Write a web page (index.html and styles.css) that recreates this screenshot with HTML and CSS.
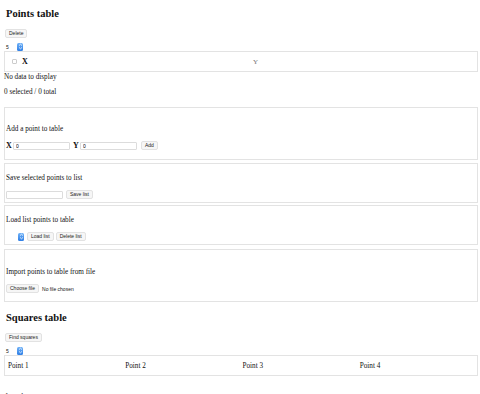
FILE: index.html
```html
<!DOCTYPE html>
<html lang="en">
<head>
    <meta charset="UTF-8">
    <title>Points and squares</title>
    <link rel="stylesheet" href="styles.css">
</head>
<body>
    <h1 class="title">Points table</h1>
    <div class="controls">
        <button class="btn">Delete</button>
        <div class="select">
            <span class="select-value">5</span>
            <span class="select-arrow"><svg width="5" height="7" viewBox="0 0 5 7"><path d="M1 2.6 L2.5 1.2 L4 2.6 M1 4.4 L2.5 5.8 L4 4.4" fill="none" stroke="#fff" stroke-width="0.8"/></svg></span>
        </div>
    </div>
    <div class="table">
        <div class="table-row points-row">
            <span class="cell-check"><span class="check"></span></span>
            <span class="head">X</span>
            <span class="head head-light">Y</span>
        </div>
    </div>
    <p class="note">No data to display</p>
    <p class="count">0 selected / 0 total</p>

    <section class="panel panel-tall">
        <p class="panel-title">Add a point to table</p>
        <div class="row">
            <label class="axis">X</label><input class="field" value="0">
            <label class="axis axis-y">Y</label><input class="field" value="0">
            <button class="btn btn-add">Add</button>
        </div>
    </section>

    <section class="panel panel-short">
        <p class="panel-title">Save selected points to list</p>
        <div class="row">
            <input class="field">
            <button class="btn">Save list</button>
        </div>
    </section>

    <section class="panel panel-short panel-load">
        <p class="panel-title">Load list points to table</p>
        <div class="row">
            <div class="select select-empty">
                <span class="select-value"></span>
                <span class="select-arrow"><svg width="5" height="7" viewBox="0 0 5 7"><path d="M1 2.6 L2.5 1.2 L4 2.6 M1 4.4 L2.5 5.8 L4 4.4" fill="none" stroke="#fff" stroke-width="0.8"/></svg></span>
            </div>
            <button class="btn">Load list</button>
            <button class="btn">Delete list</button>
        </div>
    </section>

    <section class="panel panel-tall panel-import">
        <p class="panel-title">Import points to table from file</p>
        <div class="row">
            <button class="btn">Choose file</button>
            <span class="file-name">No file chosen</span>
        </div>
    </section>

    <h1 class="title title-squares">Squares table</h1>
    <div class="controls">
        <button class="btn">Find squares</button>
        <div class="select">
            <span class="select-value">5</span>
            <span class="select-arrow"><svg width="5" height="7" viewBox="0 0 5 7"><path d="M1 2.6 L2.5 1.2 L4 2.6 M1 4.4 L2.5 5.8 L4 4.4" fill="none" stroke="#fff" stroke-width="0.8"/></svg></span>
        </div>
    </div>
    <div class="table">
        <div class="table-row squares-row">
            <span>Point 1</span>
            <span>Point 2</span>
            <span>Point 3</span>
            <span>Point 4</span>
        </div>
    </div>
    <p class="total">1 total</p>
</body>
</html>
```

FILE: styles.css
```css
* { box-sizing: border-box; }
body { margin: 0; padding: 0 2px 0 4px; font-family: "Liberation Serif", "Times New Roman", serif; font-size: 7.2px; color: #111; background: #fff; }
p { margin: 0; }

.title { font-size: 10.5px; line-height: 14px; font-weight: bold; margin: 7px 0 8px 2px; }
.title-squares { margin: 9px 0 8px 2px; }

.controls { padding-left: 1px; }
.controls .btn { display: block; margin-bottom: 4px; }

.btn { font-family: "Liberation Sans", Arial, sans-serif; font-size: 5px; line-height: 7px; height: 9px; padding: 0 3px; color: #222; background: #f6f6f6; border: 1px solid #e2e2e2; border-radius: 2px; }

.select { display: flex; align-items: center; height: 9px; width: 19px; }
.select-value { font-family: "Liberation Sans", Arial, sans-serif; font-size: 5px; width: 12px; padding-left: 1px; }
.select-arrow { display: flex; align-items: center; justify-content: center; width: 6px; height: 8px; border-radius: 1.5px; background: linear-gradient(#6fb1f7, #2f7fe6); }

.table { border: 1px solid #e3e3e3; height: 21px; }
.table-row { display: grid; align-items: center; height: 19px; }
.points-row { grid-template-columns: 17px 231px 1fr; }
.squares-row { grid-template-columns: repeat(4, 1fr); padding-left: 3px; }
.cell-check { display: flex; justify-content: center; padding-left: 1px; }
.check { width: 5px; height: 5px; border: 1px solid #ccc; border-radius: 1px; }
.head { font-size: 8px; font-weight: bold; }
.head-light { color: #777; font-weight: normal; font-size: 7px; }

.note { line-height: 10px; }
.count { line-height: 10px; margin-top: 5px; }

.panel { border: 1px solid #e3e3e3; padding: 0 1px; }
.panel-tall { height: 53px; padding-top: 16px; margin-top: 10px; }
.panel-short { height: 40px; padding-top: 9px; margin-top: 3px; }
.panel-load { margin-top: 2px; }
.panel-import { margin-top: 4px; padding-top: 17px; }
.panel-title { line-height: 10px; margin-bottom: 7px; }

.row { display: flex; align-items: center; gap: 3px; height: 9px; }
.axis { font-size: 8px; font-weight: bold; width: 6px; margin-right: -2px; }
.field { width: 57px; height: 8px; padding: 0 2px; font-family: "Liberation Sans", Arial, sans-serif; font-size: 5px; border: 1px solid #dcdcdc; border-radius: 1px; }
.btn-add { margin-left: 1px; }
.panel-load .row { gap: 1px; }
.panel-load .btn { margin-left: 1px; }
.file-name { font-family: "Liberation Sans", Arial, sans-serif; font-size: 5px; }

.total { line-height: 10px; margin-top: 16px; padding-left: 1px; }
```
